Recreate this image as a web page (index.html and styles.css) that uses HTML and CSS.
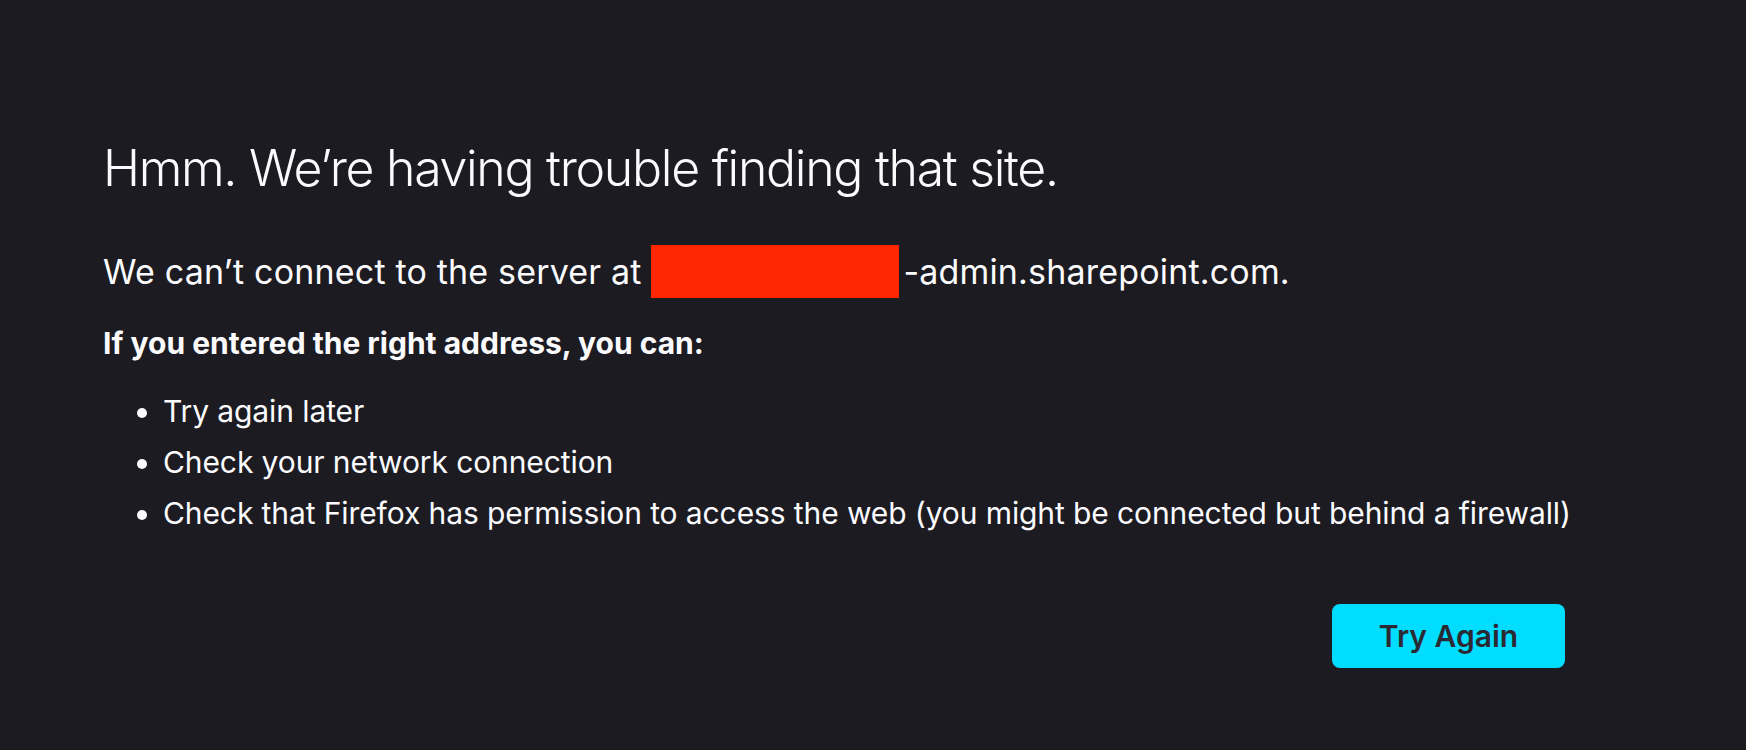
FILE: index.html
```html
<!DOCTYPE html>
<html lang="en">
<head>
<meta charset="utf-8">
<title>Problem loading page</title>
<link rel="stylesheet" href="styles.css">
</head>
<body>
<main class="container">
  <h1 class="title">Hmm. We’re having trouble finding that site.</h1>
  <p class="intro">We can’t connect to the server at <span class="redact"></span>-admin.sharepoint.com.</p>
  <p class="lead">If you entered the right address, you can:</p>
  <ul class="tips">
    <li>Try again later</li>
    <li>Check your network connection</li>
    <li>Check that Firefox has permission to access the web (you might be connected but behind a firewall)</li>
  </ul>
  <div class="actions">
    <button class="retry" type="button">Try Again</button>
  </div>
</main>
</body>
</html>
```

FILE: styles.css
```css
html, body {
  margin: 0;
  padding: 0;
  background: #1c1b22;
  color: #fbfbfe;
  font-family: Inter, "Noto Sans", sans-serif;
  height: 100%;
}

.container {
  width: 1462px;
  padding: 138px 0 0 103px;
  display: flex;
  flex-direction: column;
}

.title {
  margin: 0;
  font-size: 50px;
  font-weight: 300;
  line-height: 60px;
  letter-spacing: -1.3px;
}

.intro {
  margin: 47px 0 0;
  font-size: 34px;
  font-weight: 400;
  line-height: 53px;
  letter-spacing: 0.18px;
  display: flex;
  align-items: center;
  white-space: pre;
}

.redact {
  display: inline-block;
  width: 248px;
  height: 53px;
  background: #ff2600;
  margin: 0 4px 0 0;
}

.lead {
  margin: 25px 0 0;
  font-size: 30px;
  font-weight: 700;
  line-height: 40px;
}

.tips {
  margin: 23px 0 0;
  padding: 0 0 0 60px;
  font-size: 30px;
  line-height: 51px;
  letter-spacing: -0.1px;
  white-space: nowrap;
}

.actions {
  display: flex;
  justify-content: flex-end;
  margin-top: 65px;
}

.retry {
  width: 233px;
  height: 64px;
  border: none;
  border-radius: 8px;
  background: #00ddff;
  color: #2b2a33;
  font-family: Inter, "Noto Sans", sans-serif;
  font-size: 30px;
  font-weight: 600;
}
```
